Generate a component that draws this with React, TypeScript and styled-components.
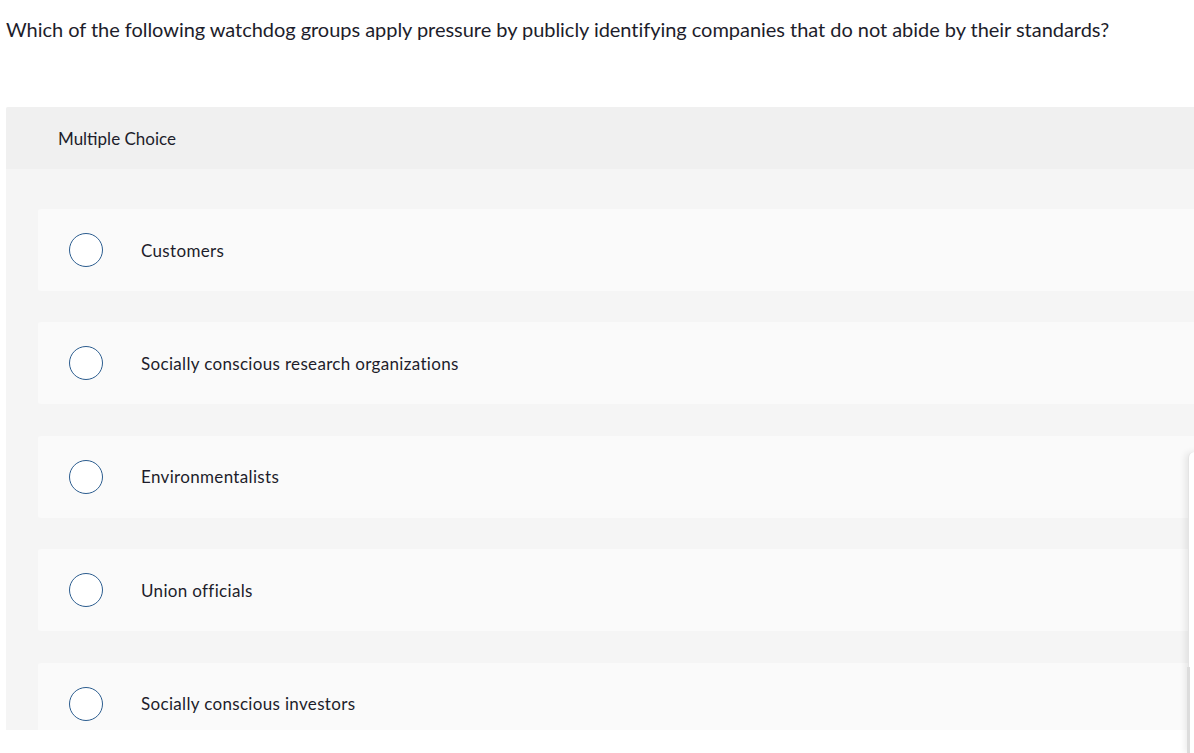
import React from "react";
import styled, { createGlobalStyle } from "styled-components";

const GlobalStyle = createGlobalStyle`
  html, body {
    margin: 0;
    padding: 0;
    background: #ffffff;
    overflow: hidden;
  }
  body {
    font-family: Lato, "Open Sans", Arial, sans-serif;
    color: #1d1d2b;
  }
`;

const Page = styled.div`
  position: relative;
  width: 1194px;
  height: 753px;
  overflow: hidden;
  padding-left: 6px;
  box-sizing: border-box;
`;

const Question = styled.p`
  margin: 0;
  padding-top: 16px;
  font-size: 20px;
  line-height: 27px;
  letter-spacing: -0.04px;
  color: #1d1d2b;
  white-space: nowrap;
`;

const Panel = styled.section`
  margin-top: 64px;
  width: calc(100% + 20px);
  height: 623px;
  overflow: hidden;
  background: #f5f5f5;
  border-top-left-radius: 2px;
`;

const PanelHeader = styled.header`
  height: 62px;
  background: #f0f0f0;
  display: flex;
  align-items: center;
  padding-left: 52px;
  font-size: 17px;
  color: #1d1d2b;
`;

const Options = styled.ul`
  list-style: none;
  margin: 0;
  padding: 40px 0 0 32px;
  display: flex;
  flex-direction: column;
  gap: 31.4px;
`;

const Option = styled.li`
  height: 82px;
  background: #fafafa;
  border-top-left-radius: 3px;
  border-bottom-left-radius: 3px;
  display: flex;
  align-items: center;
  padding-left: 31px;
  font-size: 17px;
  letter-spacing: 0.33px;
  color: #1d1d2b;
  cursor: pointer;
`;

const Radio = styled.span`
  width: 32px;
  height: 32px;
  border: 1.6px solid #2c5d8f;
  border-radius: 50%;
  background: #ffffff;
  flex: 0 0 auto;
  margin-right: 38px;
`;

const EdgeOverlay = styled.div`
  position: absolute;
  left: 1188px;
  top: 452px;
  width: 20px;
  bottom: 0;
  background: #ffffff;
  border-top-left-radius: 6px;
  box-shadow: -3px 0 6px rgba(0, 0, 0, 0.08);
  border-left: 1px solid #e4e4e4;
`;

const EdgeBar = styled.div`
  position: absolute;
  left: 1187px;
  top: 667px;
  width: 3px;
  bottom: 0;
  background: #dcdcdc;
`;

const choices = [
  "Customers",
  "Socially conscious research organizations",
  "Environmentalists",
  "Union officials",
  "Socially conscious investors",
];

export default function App() {
  return (
    <>
      <GlobalStyle />
      <Page>
        <Question>
          Which of the following watchdog groups apply pressure by publicly
          identifying companies that do not abide by their standards?
        </Question>
        <Panel>
          <PanelHeader>Multiple Choice</PanelHeader>
          <Options>
            {choices.map((c) => (
              <Option key={c}>
                <Radio />
                {c}
              </Option>
            ))}
          </Options>
        </Panel>
        <EdgeOverlay />
        <EdgeBar />
      </Page>
    </>
  );
}
